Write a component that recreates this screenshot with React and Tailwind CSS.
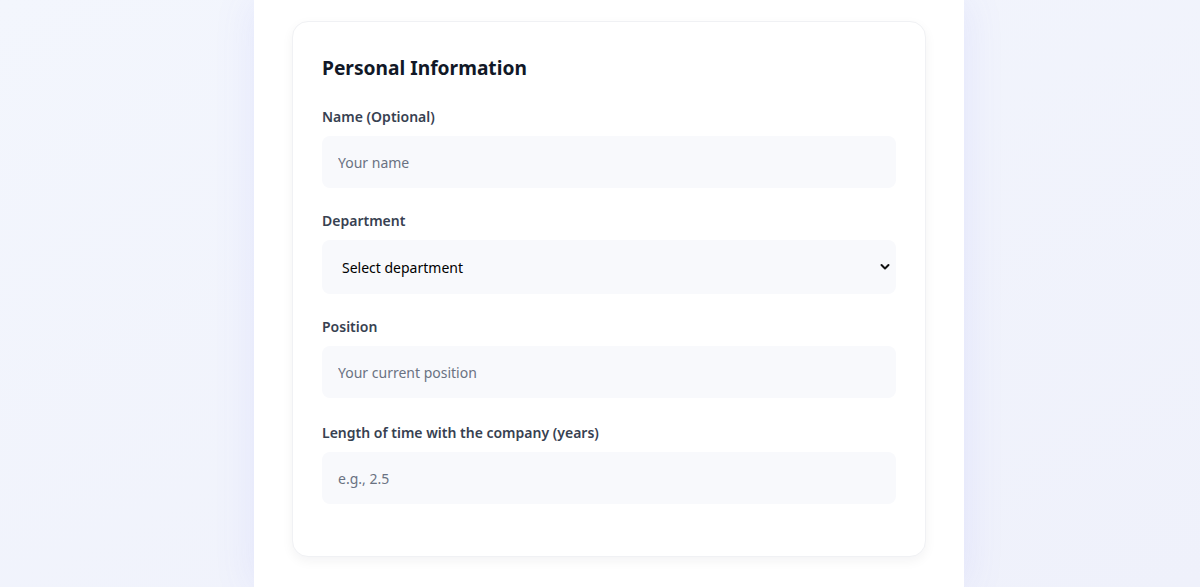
import React, { useState } from 'react';

const inputClass =
  "block w-full h-[52px] rounded-lg bg-[#f8f9fc] px-4 text-[14px] text-gray-900 placeholder:text-gray-500 focus:outline-none focus:ring-2 focus:ring-indigo-300";

const labelClass = "block text-[14px] leading-5 font-semibold text-[#374151] mb-[9px]";

export default function App() {
  const [name, setName] = useState('');
  const [department, setDepartment] = useState('');
  const [position, setPosition] = useState('');
  const [years, setYears] = useState('');

  return (
    <div
      className="min-h-screen bg-gradient-to-br from-[#f3f6fd] to-[#eff1fb] flex justify-center pl-[18px]"
      style={{ fontFamily: '"Noto Sans", "Open Sans", sans-serif' }}
    >
      <div className="w-[710px] bg-white shadow-[0_0_40px_rgba(99,102,241,0.10)] px-[38px] pt-[21px] pb-8 min-h-screen">
        <form className="rounded-2xl border border-[#f0f1f4] bg-white shadow-[0_4px_12px_rgba(15,23,42,0.05)] px-[29px] pt-[32px] pb-[52px]">
          <h2 className="text-[19.2px] leading-7 font-bold text-[#111827] mb-[25px]">Personal Information</h2>

          <div className="mb-[23px]">
            <label htmlFor="name" className={labelClass}>Name (Optional)</label>
            <input id="name" type="text" placeholder="Your name" className={inputClass} value={name} onChange={(e) => setName(e.target.value)} />
          </div>

          <div className="mb-[23px]">
            <label htmlFor="department" className={labelClass}>Department</label>
            <div className="relative">
              <select
                id="department"
                className="block w-full h-[54px] appearance-none rounded-lg bg-[#f8f9fc] pl-5 pr-10 text-[14px] text-black focus:outline-none"
                value={department}
                onChange={(e) => setDepartment(e.target.value)}
              >
                <option value="">Select department</option>
                <option value="hr">Human Resources</option>
                <option value="it">IT</option>
                <option value="sales">Sales</option>
              </select>
              <svg className="pointer-events-none absolute right-[6px] top-1/2 -translate-y-1/2" width="10" height="7" viewBox="0 0 10 7" fill="none">
                <path d="M1.5 1.5L5 5L8.5 1.5" stroke="#111" strokeWidth="2" strokeLinecap="round" strokeLinejoin="round" />
              </svg>
            </div>
          </div>

          <div className="mb-[25px]">
            <label htmlFor="position" className={labelClass}>Position</label>
            <input id="position" type="text" placeholder="Your current position" className={inputClass} value={position} onChange={(e) => setPosition(e.target.value)} />
          </div>

          <div>
            <label htmlFor="years" className={labelClass}>Length of time with the company (years)</label>
            <input id="years" type="text" placeholder="e.g., 2.5" className={inputClass} value={years} onChange={(e) => setYears(e.target.value)} />
          </div>
        </form>
      </div>
    </div>
  );
}
